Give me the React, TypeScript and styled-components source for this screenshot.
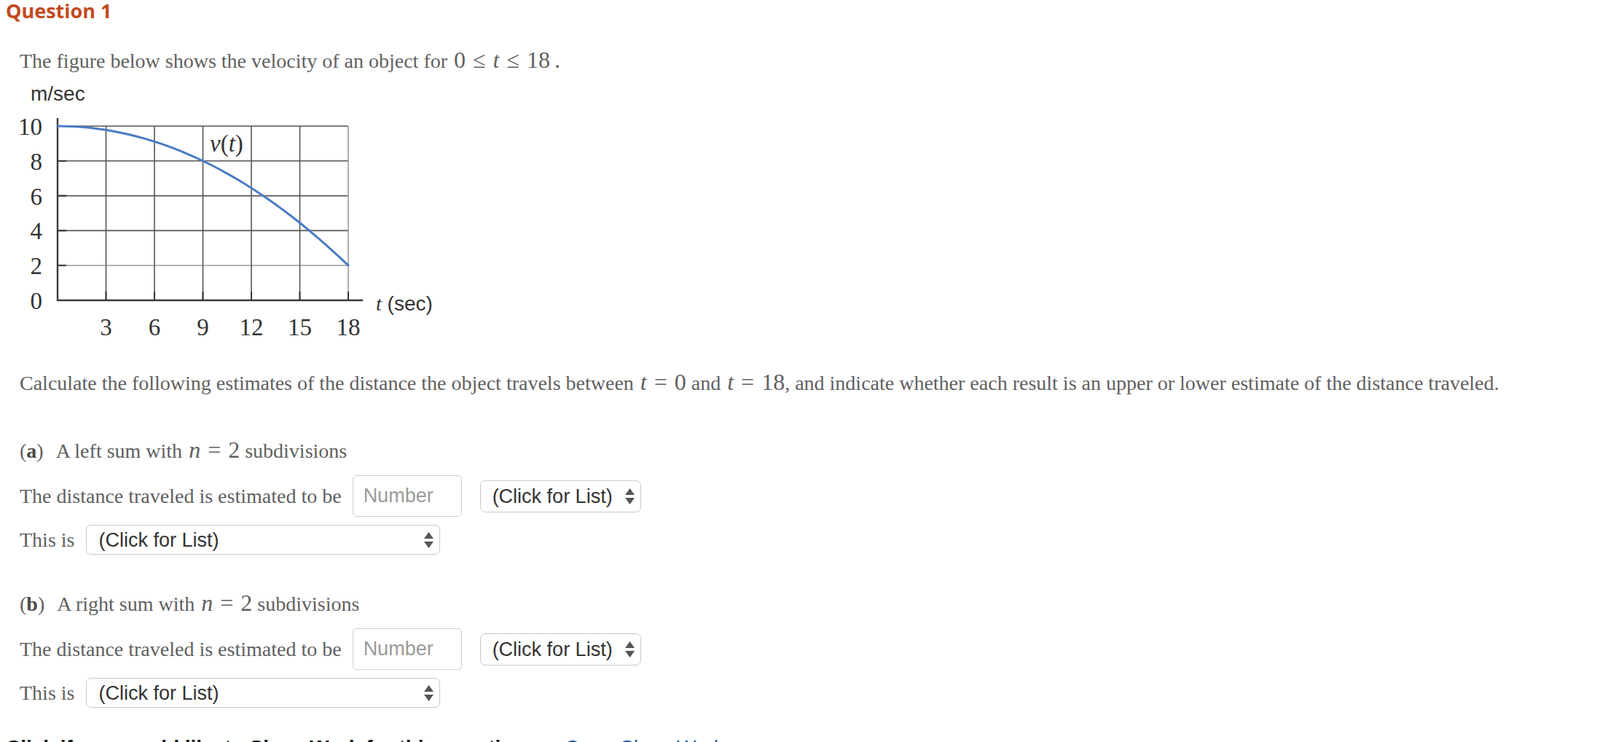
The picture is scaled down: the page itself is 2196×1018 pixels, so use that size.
import React from 'react';
import styled, { createGlobalStyle } from 'styled-components';

const SERIF = '"Liberation Serif", "Times New Roman", serif';
const SANS = '"Liberation Sans", Arial, sans-serif';

const GlobalStyle = createGlobalStyle`
  html, body {
    margin: 0;
    padding: 0;
    background: #fff;
  }
  body {
    font-family: ${SERIF};
  }
`;

// chart geometry (svg coords)
const L = 52;
const R = 451;
const T = 69;
const B = 308;
const colW = (R - L) / 6;
const rowH = (B - T) / 5;
const xOf = (t: number) => L + (t / 3) * colW;
const yOf = (v: number) => B - (v / 2) * rowH;

function curvePath() {
    const pts: string[] = [];
    for (let t = 0; t <= 18.001; t += 0.5) {
        const v = 10 - (2 * t * t) / 81;
        pts.push(`${pts.length ? 'L' : 'M'}${xOf(t).toFixed(2)},${yOf(v).toFixed(2)}`);
    }
    return pts.join(' ');
}

function VelocityChart() {
    const ticksT = [3, 6, 9, 12, 15, 18];
    const ticksV = [0, 2, 4, 6, 8, 10];
    return (
        <ChartSvg width={600} height={370} viewBox="0 0 600 370">
            <UnitText x={15} y={34}>m/sec</UnitText>

            {/* grid */}
            {ticksV.slice(1).map(v => (
                <line key={'h' + v} x1={L} x2={R} y1={yOf(v)} y2={yOf(v)}
                      stroke={v === 2 ? '#9a9a9a' : '#555'} strokeWidth={1.6}/>
            ))}
            {ticksT.map(t => (
                <line key={'v' + t} x1={xOf(t)} x2={xOf(t)} y1={T} y2={B}
                      stroke={t === 18 ? '#9a9a9a' : '#555'} strokeWidth={1.6}/>
            ))}

            {/* ticks */}
            {ticksV.slice(1).map(v => (
                <line key={'ty' + v} x1={L} x2={L + 12} y1={yOf(v)} y2={yOf(v)} stroke="#333" strokeWidth={2}/>
            ))}
            {ticksT.map(t => (
                <line key={'tx' + t} x1={xOf(t)} x2={xOf(t)} y1={B - 12} y2={B} stroke="#333" strokeWidth={2}/>
            ))}

            {/* axes */}
            <line x1={L} x2={L} y1={58} y2={B + 1} stroke="#3a3a3a" strokeWidth={2.4}/>
            <line x1={L} x2={471} y1={B} y2={B} stroke="#3a3a3a" strokeWidth={2.4}/>

            <path d={curvePath()} fill="none" stroke="#4b7bc4" strokeWidth={3} strokeLinecap="round"/>

            {ticksV.map(v => (
                <AxisNum key={'lv' + v} x={31} y={yOf(v) + 12} textAnchor="end">{v}</AxisNum>
            ))}
            {ticksT.map(t => (
                <AxisNum key={'lt' + t} x={xOf(t)} y={356} textAnchor="middle">{t}</AxisNum>
            ))}

            <CurveLabel x={261} y={104}>
                <tspan fontStyle="italic">v</tspan>(<tspan fontStyle="italic">t</tspan>)
            </CurveLabel>

            <UnitText x={489} y={322}>
                <tspan fontFamily={SERIF} fontStyle="italic">t</tspan> (sec)
            </UnitText>
        </ChartSvg>
    );
}

function ArrowPair() {
    return (
        <ArrowIcon width="13" height="22" viewBox="0 0 13 22">
            <path d="M6.5 0 L13 9 L0 9 Z" fill="#555"/>
            <path d="M6.5 22 L13 13 L0 13 Z" fill="#555"/>
        </ArrowIcon>
    );
}

function ListSelect({width, height, shift, options}: {
    width: number; height: number; shift: number; options: string[]
}) {
    return (
        <SelectWrap $shift={shift}>
            <StyledSelect $w={width} $h={height} defaultValue="">
                <option value="">(Click for List)</option>
                {options.map(o => <option key={o} value={o}>{o}</option>)}
            </StyledSelect>
            <ArrowPair/>
        </SelectWrap>
    );
}

function Part({letter, side, top}: { letter: string; side: string; top: number }) {
    return (
        <>
            <TextLine $top={top}>
                (<b>{letter}</b>)<LabelGap/>A {side} sum with <MathRun><MathI>n</MathI><MathOp>=</MathOp>2</MathRun> subdivisions
            </TextLine>
            <FieldRow $top={13} $h={57} $gap={15}>
                <span>The distance traveled is estimated to be</span>
                <NumberInput placeholder="Number"/>
                <ListSelect width={221} height={44} shift={10} options={['m', 'm/sec', 'sec']}/>
            </FieldRow>
            <FieldRow $top={11} $h={41} $gap={16}>
                <span>This is</span>
                <ListSelect width={486} height={41} shift={0}
                            options={['an upper estimate', 'a lower estimate']}/>
            </FieldRow>
        </>
    );
}

export default function App() {
    return (
        <Page>
            <GlobalStyle/>
            <QuestionTitle>Question 1</QuestionTitle>
            <Body>
                <TextLine $top={34}>
                    The figure below shows the velocity of an object for <MathRun>0<MathOp>≤</MathOp><MathI>t</MathI><MathOp>≤</MathOp>18<Period>.</Period></MathRun>
                </TextLine>
                <VelocityChart/>
                <TextLine $top={32}>
                    Calculate the following estimates of the distance the object travels between <MathRun><MathI>t</MathI><MathOp>=</MathOp>0</MathRun> and <MathRun><MathI>t</MathI><MathOp>=</MathOp>18</MathRun>, and indicate whether each result is an upper or lower estimate of the distance traveled.
                </TextLine>
                <Part letter="a" side="left" top={53}/>
                <Part letter="b" side="right" top={48}/>
            </Body>
            <ShowWork>
                Click if you would like to Show Work for this question:
                <ShowWorkLink href="#">Open Show Work</ShowWorkLink>
            </ShowWork>
        </Page>
    );
}

const Page = styled.div`
  box-sizing: border-box;
  padding: 0 0 0 8px;
  width: 2196px;
  height: 1018px;
  overflow: hidden;
  color: #5f5f5f;
`

const QuestionTitle = styled.h1`
  margin: 0;
  font-family: "Open Sans", ${SANS};
  font-weight: 700;
  font-size: 27px;
  line-height: 30px;
  color: #c24a1e;
`

const Body = styled.div`
  padding-left: 19px;
`

const TextLine = styled.div<{ $top: number }>`
  margin-top: ${p => p.$top}px;
  font-family: ${SERIF};
  font-size: 28px;
  line-height: 40px;
  color: #5f5f5f;
  white-space: nowrap;

  b {
    font-weight: 700;
    color: #4a4a4a;
  }
`

const LabelGap = styled.span`
  display: inline-block;
  width: 17px;
`

const MathRun = styled.span`
  font-family: ${SERIF};
  font-size: 32px;
  line-height: 1;
  margin-left: 2px;
`

const MathI = styled.i`
  font-style: italic;
`

const MathOp = styled.span`
  margin: 0 10px;
`

const Period = styled.span`
  margin-left: 6px;
`

const ChartSvg = styled.svg`
  display: block;
  overflow: visible;
`

const UnitText = styled.text`
  font-family: ${SANS};
  font-size: 28px;
  fill: #333;
`

const AxisNum = styled.text`
  font-family: ${SERIF};
  font-size: 33px;
  fill: #333;
`

const CurveLabel = styled.text`
  font-family: ${SERIF};
  font-size: 33px;
  fill: #333;
`

const FieldRow = styled.div<{ $top: number; $h: number; $gap: number }>`
  display: flex;
  align-items: center;
  gap: ${p => p.$gap}px;
  margin-top: ${p => p.$top}px;
  height: ${p => p.$h}px;
  font-family: ${SERIF};
  font-size: 28px;
  line-height: 40px;
  color: #5f5f5f;
  white-space: nowrap;
`

const NumberInput = styled.input`
  box-sizing: border-box;
  width: 150px;
  height: 57px;
  padding: 0 0 0 14px;
  border: 1px solid #cfcfcf;
  border-radius: 5px;
  font-family: ${SANS};
  font-size: 27px;
  color: #333;
  outline: none;

  &::placeholder {
    color: #9a9a9a;
  }
`

const SelectWrap = styled.span<{ $shift: number }>`
  position: relative;
  display: inline-block;
  margin-left: ${p => p.$shift}px;
`

const StyledSelect = styled.select<{ $w: number; $h: number }>`
  appearance: none;
  -webkit-appearance: none;
  box-sizing: border-box;
  display: block;
  width: ${p => p.$w}px;
  height: ${p => p.$h}px;
  padding: 0 30px 0 16px;
  border: 1.5px solid #c9c9c9;
  border-radius: 7px;
  background: #fff;
  font-family: ${SANS};
  font-size: 27px;
  line-height: normal;
  color: #333;
  outline: none;
`

const ArrowIcon = styled.svg`
  position: absolute;
  right: 9px;
  top: 50%;
  transform: translateY(-50%);
  pointer-events: none;
`

const ShowWork = styled.div`
  margin-top: 35px;
  font-family: ${SANS};
  font-weight: 700;
  font-size: 28px;
  line-height: 40px;
  color: #111;
  white-space: nowrap;
`

const ShowWorkLink = styled.a`
  margin-left: 44px;
  font-weight: 400;
  color: #1d5a9a;
  text-decoration: none;
`
